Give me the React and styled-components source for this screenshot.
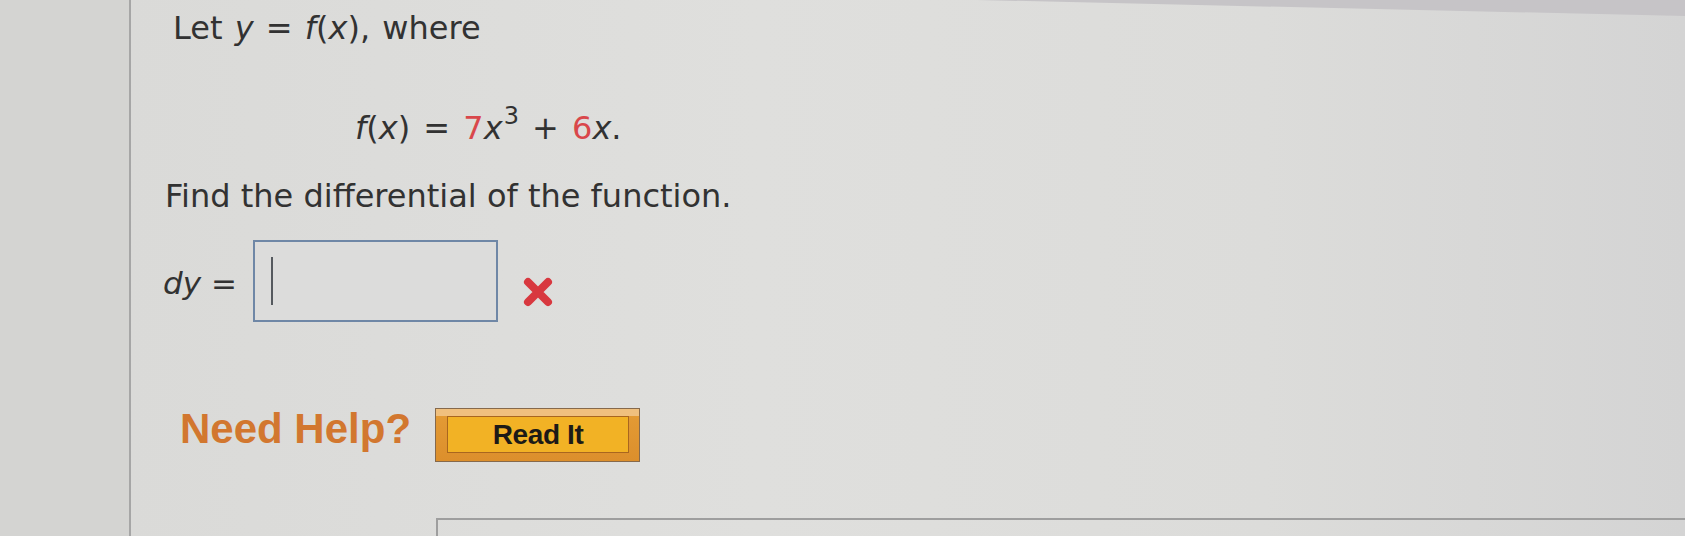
import React from 'react';
import styled, { createGlobalStyle } from 'styled-components';

const Global = createGlobalStyle`
  html, body { margin: 0; padding: 0; height: 536px; overflow: hidden; }
  body {
    background: #d8d8d6;
    font-family: "DejaVu Sans", Verdana, sans-serif;
    color: #323232;
  }
`;

const Page = styled.div`
  position: relative;
  display: flex;
  height: 536px;
  overflow: hidden;
  background: linear-gradient(to right, #d9d9d7 0%, #dfdfdd 45%, #dcdcda 75%, #d4d4d4 100%);
  &::before {
    content: '';
    position: absolute;
    top: 0;
    left: 0;
    right: 0;
    height: 16px;
    background: #c6c4c7;
    clip-path: polygon(58% 0, 100% 0, 100% 100%);
  }
`;

const Gutter = styled.div`
  flex: 0 0 129px;
  background: #d4d4d2;
  border-right: 2px solid #a6a6a6;
`;

const Content = styled.main`
  flex: 1;
  display: flex;
  flex-direction: column;
  align-items: flex-start;
  padding: 9px 0 0 39px;
`;

const Line = styled.p`
  margin: ${p => p.$top || 0}px 0 0 ${p => p.$indent || 0}px;
  font-size: ${p => p.$size || 31}px;
  line-height: ${p => p.$lh || 37}px;
  word-spacing: ${p => p.$ws || 0}px;
  white-space: nowrap;
`;

const Var = styled.i`
  font-style: italic;
`;

const Coef = styled.span`
  color: #d9474b;
`;

const Sup = styled.sup`
  font-size: 24px;
  line-height: 0;
  vertical-align: baseline;
  position: relative;
  top: -15px;
  margin-left: 1px;
`;

const AnswerRow = styled.div`
  display: flex;
  align-items: center;
  margin: 25px 0 0 -7px;
`;

const Label = styled.span`
  font-size: 31px;
  line-height: 37px;
  padding-top: 5px;
  margin-right: 16px;
  white-space: nowrap;
`;

const Field = styled.div`
  box-sizing: border-box;
  width: 245px;
  height: 82px;
  border: 2px solid #6f87a6;
  background: #dcdcdb;
  display: flex;
  align-items: center;
  padding-left: 16px;
`;

const Caret = styled.span`
  display: block;
  width: 2px;
  height: 48px;
  background: #55595e;
`;

const Mark = styled.svg`
  margin: 22px 0 0 22px;
  width: 36px;
  height: 36px;
`;

const HelpRow = styled.div`
  display: flex;
  align-items: flex-start;
  margin: 86px 0 0 10px;
`;

const HelpTitle = styled.span`
  font-family: "Liberation Sans", Arial, sans-serif;
  font-weight: 700;
  font-size: 42px;
  line-height: 42px;
  color: #d2772f;
  margin-right: 24px;
  white-space: nowrap;
`;

const ReadButton = styled.button`
  box-sizing: border-box;
  width: 205px;
  height: 54px;
  padding: 7px 10px 8px 11px;
  border: 1px solid #86694b;
  background: linear-gradient(#f0c07e 0, #f0c07e 7px, #e39a34 7px, #dc8f2c 100%);
  display: flex;
  cursor: pointer;
`;

const ButtonFace = styled.span`
  flex: 1;
  display: flex;
  align-items: center;
  justify-content: center;
  border: 1px solid #a9661f;
  background: #f2b225;
  font-family: "Liberation Sans", Arial, sans-serif;
  font-weight: 700;
  font-size: 28px;
  color: #1c1a17;
  letter-spacing: -0.4px;
`;

const NextPanel = styled.div`
  box-sizing: border-box;
  align-self: stretch;
  margin: 56px 0 0 266px;
  height: 60px;
  border-top: 2px solid #9e9e9e;
  border-left: 2px solid #9e9e9e;
`;

function CrossMark() {
  return (
    <Mark viewBox="0 0 36 36" aria-label="incorrect">
      <path d="M8 8 L28 28 M28 8 L8 28" stroke="#d8383f" strokeWidth="8" strokeLinecap="round" fill="none" />
    </Mark>
  );
}

export default function App() {
  return (
    <>
      <Global />
      <Page>
        <Gutter />
        <Content>
          <Line $size={32} $lh={38} $indent={3} $ws={2}>
            Let <Var>y</Var> = <Var>f</Var>(<Var>x</Var>), where
          </Line>
          <Line $size={32} $lh={38} $top={62} $indent={185} $ws={3}>
            <Var>f</Var>(<Var>x</Var>) = <Coef>7</Coef><Var>x</Var><Sup>3</Sup> + <Coef>6</Coef><Var>x</Var>.
          </Line>
          <Line $size={32} $lh={37} $top={31} $indent={-5}>
            Find the differential of the function.
          </Line>
          <AnswerRow>
            <Label><Var>dy</Var> =</Label>
            <Field>
              <Caret />
            </Field>
            <CrossMark />
          </AnswerRow>
          <HelpRow>
            <HelpTitle>Need Help?</HelpTitle>
            <ReadButton type="button">
              <ButtonFace>Read It</ButtonFace>
            </ReadButton>
          </HelpRow>
          <NextPanel />
        </Content>
      </Page>
    </>
  );
}
